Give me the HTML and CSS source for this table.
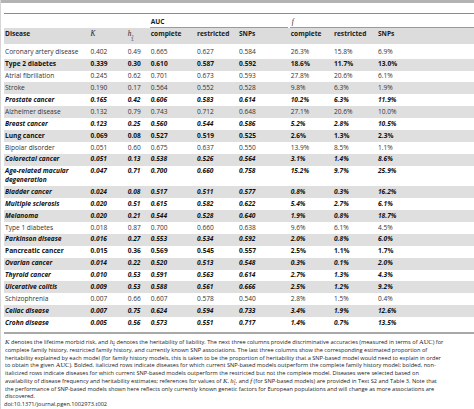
FILE: index.html
```html
<!DOCTYPE html>
<html>
<head>
<meta charset="utf-8">
<link rel="stylesheet" href="styles.css">
</head>
<body>
<div class="page">
  <div class="topbar"></div>
  <div class="content">
    <table class="data">
      <colgroup>
        <col class="c1"><col class="c2"><col class="c3"><col class="c4"><col class="c5"><col class="c6"><col class="c7"><col class="c8"><col class="c9">
      </colgroup>
      <thead>
        <tr class="grp">
          <th></th><th></th><th></th>
          <th colspan="3"><div class="span auc">AUC</div></th>
          <th colspan="3"><div class="span fgrp"><i class="sym">f</i></div></th>
        </tr>
        <tr class="cols">
          <th>Disease</th>
          <th><i class="sym">K</i></th>
          <th><i class="sym">h</i><span class="ss"><span>2</span><span>L</span></span></th>
          <th>complete</th><th>restricted</th><th>SNPs</th>
          <th>complete</th><th>restricted</th><th>SNPs</th>
        </tr>
      </thead>
      <tbody>
        <tr class="n"><td>Coronary artery disease</td><td>0.402</td><td>0.49</td><td>0.665</td><td>0.627</td><td>0.584</td><td>26.3%</td><td>15.8%</td><td>6.9%</td></tr>
        <tr class="b"><td>Type 2 diabetes</td><td>0.339</td><td>0.30</td><td>0.610</td><td>0.587</td><td>0.592</td><td>18.6%</td><td>11.7%</td><td>13.0%</td></tr>
        <tr class="n"><td>Atrial fibrillation</td><td>0.245</td><td>0.62</td><td>0.701</td><td>0.673</td><td>0.593</td><td>27.8%</td><td>20.6%</td><td>6.1%</td></tr>
        <tr class="n"><td>Stroke</td><td>0.190</td><td>0.17</td><td>0.564</td><td>0.552</td><td>0.528</td><td>9.8%</td><td>6.3%</td><td>1.9%</td></tr>
        <tr class="bi"><td>Prostate cancer</td><td>0.165</td><td>0.42</td><td>0.606</td><td>0.583</td><td>0.614</td><td>10.2%</td><td>6.3%</td><td>11.9%</td></tr>
        <tr class="n"><td>Alzheimer disease</td><td>0.132</td><td>0.79</td><td>0.743</td><td>0.712</td><td>0.648</td><td>27.1%</td><td>20.6%</td><td>10.0%</td></tr>
        <tr class="bi"><td>Breast cancer</td><td>0.123</td><td>0.25</td><td>0.560</td><td>0.544</td><td>0.586</td><td>5.2%</td><td>2.8%</td><td>10.5%</td></tr>
        <tr class="b"><td>Lung cancer</td><td>0.069</td><td>0.08</td><td>0.527</td><td>0.519</td><td>0.525</td><td>2.6%</td><td>1.3%</td><td>2.3%</td></tr>
        <tr class="n"><td>Bipolar disorder</td><td>0.051</td><td>0.60</td><td>0.675</td><td>0.637</td><td>0.550</td><td>13.9%</td><td>8.5%</td><td>1.1%</td></tr>
        <tr class="bi"><td>Colorectal cancer</td><td>0.051</td><td>0.13</td><td>0.538</td><td>0.526</td><td>0.564</td><td>3.1%</td><td>1.4%</td><td>8.6%</td></tr>
        <tr class="bi"><td>Age-related macular<br>degeneration</td><td>0.047</td><td>0.71</td><td>0.700</td><td>0.660</td><td>0.758</td><td>15.2%</td><td>9.7%</td><td>25.9%</td></tr>
        <tr class="bi"><td>Bladder cancer</td><td>0.024</td><td>0.08</td><td>0.517</td><td>0.511</td><td>0.577</td><td>0.8%</td><td>0.3%</td><td>16.2%</td></tr>
        <tr class="bi"><td>Multiple sclerosis</td><td>0.020</td><td>0.51</td><td>0.615</td><td>0.582</td><td>0.622</td><td>5.4%</td><td>2.7%</td><td>6.1%</td></tr>
        <tr class="bi"><td>Melanoma</td><td>0.020</td><td>0.21</td><td>0.544</td><td>0.528</td><td>0.640</td><td>1.9%</td><td>0.8%</td><td>18.7%</td></tr>
        <tr class="n"><td>Type 1 diabetes</td><td>0.018</td><td>0.87</td><td>0.700</td><td>0.660</td><td>0.638</td><td>9.6%</td><td>6.1%</td><td>4.5%</td></tr>
        <tr class="bi"><td>Parkinson disease</td><td>0.016</td><td>0.27</td><td>0.553</td><td>0.534</td><td>0.592</td><td>2.0%</td><td>0.8%</td><td>6.0%</td></tr>
        <tr class="b"><td>Pancreatic cancer</td><td>0.015</td><td>0.36</td><td>0.569</td><td>0.545</td><td>0.557</td><td>2.5%</td><td>1.1%</td><td>1.7%</td></tr>
        <tr class="bi"><td>Ovarian cancer</td><td>0.014</td><td>0.22</td><td>0.520</td><td>0.513</td><td>0.548</td><td>0.3%</td><td>0.1%</td><td>2.0%</td></tr>
        <tr class="bi"><td>Thyroid cancer</td><td>0.010</td><td>0.53</td><td>0.591</td><td>0.563</td><td>0.614</td><td>2.7%</td><td>1.3%</td><td>4.3%</td></tr>
        <tr class="bi"><td>Ulcerative colitis</td><td>0.009</td><td>0.53</td><td>0.588</td><td>0.561</td><td>0.666</td><td>2.5%</td><td>1.2%</td><td>9.2%</td></tr>
        <tr class="n"><td>Schizophrenia</td><td>0.007</td><td>0.66</td><td>0.607</td><td>0.578</td><td>0.540</td><td>2.8%</td><td>1.5%</td><td>0.4%</td></tr>
        <tr class="bi"><td>Celiac disease</td><td>0.007</td><td>0.75</td><td>0.624</td><td>0.594</td><td>0.733</td><td>3.4%</td><td>1.9%</td><td>12.6%</td></tr>
        <tr class="bi"><td>Crohn disease</td><td>0.005</td><td>0.56</td><td>0.573</td><td>0.551</td><td>0.717</td><td>1.4%</td><td>0.7%</td><td>13.5%</td></tr>
      </tbody>
    </table>
    <div class="caption">
      <div class="ln"><i class="sym">K</i> denotes the lifetime morbid risk, and <i class="sym">h</i><span class="ss"><span>2</span><span>L</span></span> denotes the heritability of liability. The next three columns provide discriminative accuracies (measured in terms of <span class="serif">AUC</span>) for</div>
      <div class="ln">complete family history, restricted family history, and currently known SNP associations. The last three columns show the corresponding estimated proportion of</div>
      <div class="ln">heritability explained by each model (for family history models, this is taken to be the proportion of heritability that a SNP-based model would need to explain in order</div>
      <div class="ln">to obtain the given <span class="serif">AUC</span>). Bolded, italicized rows indicate diseases for which current SNP-based models outperform the complete family history model; bolded, non-</div>
      <div class="ln">italicized rows indicate diseases for which current SNP-based models outperform the restricted but not the complete model. Diseases were selected based on</div>
      <div class="ln">availability of disease frequency and heritability estimates; references for values of <i class="sym">K</i>, <i class="sym">h</i><span class="ss"><span>2</span><span>L</span></span>, and <i class="sym">f</i> (for SNP-based models) are provided in Text S2 and Table 3. Note that</div>
      <div class="ln">the performance of SNP-based models shown here reflects only currently known genetic factors for European populations and will change as more associations are</div>
      <div class="ln">discovered.</div>
      <div class="ln doi">doi:10.1371/journal.pgen.1002973.t002</div>
    </div>
  </div>
</div>
</body>
</html>
```

FILE: styles.css
```css
html, body {
  margin: 0;
  padding: 0;
  background: #ffffff;
}
body {
  width: 474px;
  height: 409px;
  overflow: hidden;
  font-family: "Open Sans", "Noto Sans", sans-serif;
  color: #2a2a2a;
}
.page {
  border-left: 1px solid #d6d6d6;
  height: 409px;
  box-sizing: border-box;
}
.topbar {
  height: 3px;
  background: #b3b3b3;
}
.content {
  padding: 10px 0 0 3px;
}
.data {
  width: 470px;
  table-layout: fixed;
  border-collapse: separate;
  border-spacing: 0;
  border-top: 1px solid #8c8c8c;
  border-bottom: 2px solid #a8a8a8;
  font-size: 6.6px;
  line-height: 8.7px;
}
.c1 { width: 85.5px; }
.c2 { width: 37.2px; }
.c3 { width: 23px; }
.c4 { width: 46.3px; }
.c5 { width: 42px; }
.c6 { width: 51.7px; }
.c7 { width: 43.3px; }
.c8 { width: 44px; }
.c9 { width: auto; }
.data th, .data td {
  text-align: left;
  vertical-align: top;
  padding: 1.6px 0 1.6px 1px;
  white-space: nowrap;
  font-weight: 400;
}
.grp th {
  padding: 2.5px 0 0 0;
  font-weight: 700;
  color: #1a1a1a;
}
.grp .span {
  height: 10.5px;
  line-height: 9px;
  border-bottom: 1px solid #9a9a9a;
  padding-left: 1px;
}
.grp .auc { margin-right: 2px; }
.grp .fgrp { padding-left: 2px; }
.cols th {
  background: #dcdcdc;
  font-weight: 700;
  color: #1a1a1a;
  padding: 2.2px 0 1.8px 1px;
  height: 9px;
}
.sym {
  font-family: "Liberation Serif", "DejaVu Serif", serif;
  font-style: italic;
  font-weight: 400;
  font-size: 1.1em;
}
.ss {
  display: inline-flex;
  flex-direction: column;
  vertical-align: -1.5px;
  font-family: "Liberation Serif", serif;
  font-style: italic;
  font-weight: 400;
  font-size: 3.8px;
  line-height: 3.3px;
  margin-left: 0.3px;
}
tbody tr:nth-child(even) td { background: #dfdfdf; }
tbody tr:first-child td { padding-top: 4.3px; }
tbody tr:last-child td { padding-bottom: 5px; }
tr.n td { color: #333333; }
tr.b td { font-weight: 700; color: #111111; }
tr.bi td { font-weight: 700; font-style: italic; color: #111111; }
.caption {
  margin-top: 5px;
  font-size: 5.65px;
  line-height: 7.7px;
  color: #222222;
  padding-left: 1px;
}
.caption .ln {
  white-space: nowrap;
  height: 7.7px;
}
.caption .sym { font-size: 1.2em; line-height: 1; }
.caption .ss {
  font-size: 3.1px;
  line-height: 2.7px;
  vertical-align: 0.6px;
}
.serif {
  font-family: "Liberation Serif", serif;
  font-size: 1.15em;
  line-height: 1;
}
.doi { margin-left: -1px; }
```
